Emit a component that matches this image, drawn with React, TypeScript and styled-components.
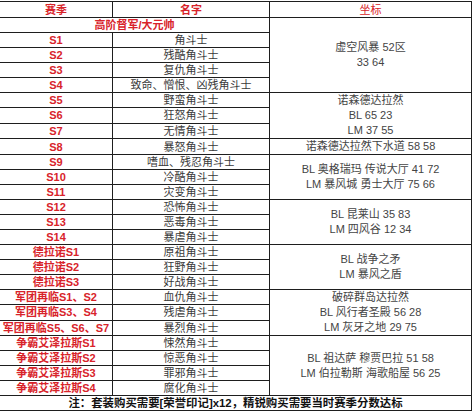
import styled, { createGlobalStyle } from "styled-components";

const GlobalStyle = createGlobalStyle`
  body {
    margin: 0;
    background: #ffffff;
    font-family: "Liberation Sans", "Noto Sans CJK SC", sans-serif;
  }
`;

const Sheet = styled.table`
  border-collapse: collapse;
  table-layout: fixed;
  width: 472px;
  margin: 1px 0 0 -1px;
  font-size: 11px;
  line-height: 14px;
`;

const Row = styled.tr<{ $tall?: boolean }>`
  height: ${(p) => (p.$tall ? "16px" : "15px")};
`;

const Cell = styled.td`
  border: 1px solid #1e1e1e;
  padding: 0;
  text-align: center;
  vertical-align: middle;
  white-space: nowrap;
  overflow: hidden;
`;

const HeadCell = styled(Cell)<{ $bold?: boolean }>`
  color: #d8232a;
  font-weight: ${(p) => (p.$bold ? 700 : 400)};
`;

const SeasonCell = styled(Cell)`
  color: #d8232a;
  font-weight: 700;
`;

const NameCell = styled(Cell)`
  color: #3a3a3a;
`;

const CoordCell = styled(Cell)`
  color: #444444;
  line-height: 15px;
`;

const NoteCell = styled(Cell)`
  color: #111111;
  font-weight: 700;
  font-size: 11.4px;
`;

type Group = {
  lines: string[];
  rows: { season: string; name: string }[];
};

const groups: Group[] = [
  {
    lines: ["诺森德达拉然", "BL 65 23", "LM 37 55"],
    rows: [
      { season: "S5", name: "野蛮角斗士" },
      { season: "S6", name: "狂怒角斗士" },
      { season: "S7", name: "无情角斗士" },
    ],
  },
  {
    lines: ["诺森德达拉然下水道 58 58"],
    rows: [{ season: "S8", name: "暴怒角斗士" }],
  },
  {
    lines: ["BL 奥格瑞玛 传说大厅 41 72", "LM 暴风城 勇士大厅 75 66"],
    rows: [
      { season: "S9", name: "嗜血、残忍角斗士" },
      { season: "S10", name: "冷酷角斗士" },
      { season: "S11", name: "灾变角斗士" },
    ],
  },
  {
    lines: ["BL 昆莱山 35 83", "LM 四风谷 12 34"],
    rows: [
      { season: "S12", name: "恐怖角斗士" },
      { season: "S13", name: "恶毒角斗士" },
      { season: "S14", name: "暴虐角斗士" },
    ],
  },
  {
    lines: ["BL 战争之矛", "LM 暴风之盾"],
    rows: [
      { season: "德拉诺S1", name: "原祖角斗士" },
      { season: "德拉诺S2", name: "狂野角斗士" },
      { season: "德拉诺S3", name: "好战角斗士" },
    ],
  },
  {
    lines: ["破碎群岛达拉然", "BL 风行者圣殿 56 28", "LM 灰牙之地 29 75"],
    rows: [
      { season: "军团再临S1、S2", name: "血仇角斗士" },
      { season: "军团再临S3、S4", name: "残虐角斗士" },
      { season: "军团再临S5、S6、S7", name: "暴烈角斗士" },
    ],
  },
  {
    lines: ["BL 祖达萨 穆贾巴拉 51 58", "LM 伯拉勒斯 海歌船屋 56 25"],
    rows: [
      { season: "争霸艾泽拉斯S1", name: "悚然角斗士" },
      { season: "争霸艾泽拉斯S2", name: "惊恶角斗士" },
      { season: "争霸艾泽拉斯S3", name: "罪邪角斗士" },
      { season: "争霸艾泽拉斯S4", name: "腐化角斗士" },
    ],
  },
];

const firstRows = [
  { season: "S1", name: "角斗士" },
  { season: "S2", name: "残酷角斗士" },
  { season: "S3", name: "复仇角斗士" },
  { season: "S4", name: "致命、憎恨、凶残角斗士" },
];

function Lines({ lines }: { lines: string[] }) {
  return (
    <>
      {lines.map((l) => (
        <div key={l}>{l}</div>
      ))}
    </>
  );
}

export default function App() {
  return (
    <>
      <GlobalStyle />
      <Sheet>
        <colgroup>
          <col style={{ width: 113 }} />
          <col style={{ width: 157 }} />
          <col style={{ width: 202 }} />
        </colgroup>
        <tbody>
          <Row $tall>
            <HeadCell $bold>赛季</HeadCell>
            <HeadCell $bold>名字</HeadCell>
            <HeadCell>坐标</HeadCell>
          </Row>
          <Row>
            <HeadCell $bold colSpan={2}>
              高阶督军/大元帅
            </HeadCell>
            <CoordCell rowSpan={5}>
              <Lines lines={["虚空风暴 52区", "33 64"]} />
            </CoordCell>
          </Row>
          {firstRows.map((r) => (
            <Row key={r.season}>
              <SeasonCell>{r.season}</SeasonCell>
              <NameCell>{r.name}</NameCell>
            </Row>
          ))}
          {groups.map((g) =>
            g.rows.map((r, i) => (
              <Row key={r.season}>
                <SeasonCell>{r.season}</SeasonCell>
                <NameCell>{r.name}</NameCell>
                {i === 0 && (
                  <CoordCell rowSpan={g.rows.length}>
                    <Lines lines={g.lines} />
                  </CoordCell>
                )}
              </Row>
            ))
          )}
          <Row>
            <NoteCell colSpan={3}>
              注：套装购买需要[荣誉印记]x12，精锐购买需要当时赛季分数达标
            </NoteCell>
          </Row>
        </tbody>
      </Sheet>
    </>
  );
}
